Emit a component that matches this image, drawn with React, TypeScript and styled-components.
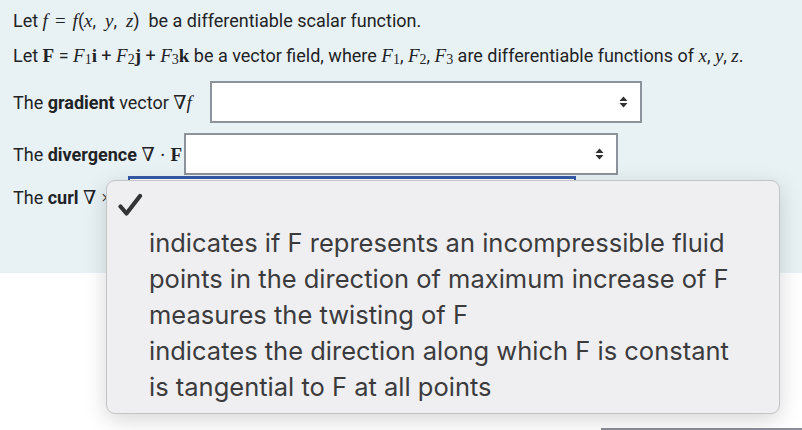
import styled, { createGlobalStyle } from "styled-components";

const GlobalStyle = createGlobalStyle`
  html, body {
    margin: 0;
    padding: 0;
    background: #ffffff;
  }
  body {
    font-family: Roboto, "Liberation Sans", Arial, sans-serif;
    color: #1f2326;
    overflow: hidden;
  }
`;

const Page = styled.div`
  width: 802px;
  height: 430px;
  display: flex;
  flex-direction: column;
  overflow: hidden;
`;

const Panel = styled.div`
  position: relative;
  height: 273px;
  box-sizing: border-box;
  padding: 9px 13px 0;
  background: #e8f2f5;
  display: flex;
  flex-direction: column;
`;

const Line = styled.div<{ $top?: number }>`
  font-size: 18px;
  line-height: 24px;
  margin-top: ${(p) => p.$top ?? 0}px;
  white-space: nowrap;
`;

const M = styled.span<{ $bold?: boolean; $italic?: boolean }>`
  font-family: "Liberation Serif", "DejaVu Serif", serif;
  font-size: 19px;
  font-style: ${(p) => (p.$italic ? "italic" : "normal")};
  font-weight: ${(p) => (p.$bold ? 700 : 400)};
`;

const Op = styled.span<{ $space: number }>`
  font-family: "Liberation Serif", "DejaVu Serif", serif;
  font-size: 19px;
  margin: 0 ${(p) => p.$space}px;
`;

const Sub = styled.span`
  font-family: "Liberation Serif", "DejaVu Serif", serif;
  font-size: 14px;
  position: relative;
  top: 2px;
`;

const Row = styled.div<{ $top: number }>`
  display: flex;
  align-items: center;
  margin-top: ${(p) => p.$top}px;
  white-space: nowrap;
`;

const Label = styled.span`
  font-size: 18px;
`;

const Select = styled.div<{ $width: number; $gap: number; $focused?: boolean }>`
  box-sizing: border-box;
  width: ${(p) => p.$width}px;
  height: 42px;
  margin-left: ${(p) => p.$gap}px;
  background: #ffffff;
  border: 2px solid ${(p) => (p.$focused ? "#3559a8" : "#8d939a")};
  border-top-width: ${(p) => (p.$focused ? 3 : 2)}px;
  display: flex;
  align-items: center;
  justify-content: flex-end;
  padding-right: 12px;
`;

const Dropdown = styled.div`
  position: absolute;
  left: 106px;
  top: 180px;
  width: 674px;
  height: 234px;
  box-sizing: border-box;
  padding: 5px 0 0 11px;
  background: #efeff1;
  border: 1px solid #c3c4c6;
  border-radius: 9px;
  box-shadow: 0 6px 22px rgba(0, 0, 0, 0.16);
  font-family: Inter, "Noto Sans", sans-serif;
  color: #3b3b3d;
`;

const Option = styled.div<{ $height?: number }>`
  display: flex;
  align-items: center;
  height: ${(p) => p.$height ?? 36}px;
  font-size: 25.5px;
  white-space: nowrap;
`;

const CheckSlot = styled.span`
  width: 31px;
  display: flex;
  align-items: center;
`;

const After = styled.div`
  margin: 155px 0 0 601px;
  flex: 1;
  border-top: 2px solid #898e98;
`;

function Arrows() {
  return (
    <svg width="9" height="12" viewBox="0 0 9 12">
      <path d="M4.5 0.5 L8.5 5 L0.5 5 Z" fill="#2f3133" />
      <path d="M0.5 7 L8.5 7 L4.5 11.5 Z" fill="#2f3133" />
    </svg>
  );
}

function Check() {
  return (
    <svg width="25" height="24" viewBox="0 0 25 24">
      <path
        d="M2.5 13.5 L8.5 20.5 L22 3"
        fill="none"
        stroke="#333436"
        strokeWidth="4.2"
        strokeLinecap="round"
        strokeLinejoin="round"
      />
    </svg>
  );
}

const options = [
  "indicates if F represents an incompressible fluid",
  "points in the direction of maximum increase of F",
  "measures the twisting of F",
  "indicates the direction along which F is constant",
  "is tangential to F at all points",
];

export default function App() {
  return (
    <>
      <GlobalStyle />
      <Page>
        <Panel>
          <Line>
            Let <M $italic>f</M>
            <Op $space={7}>=</Op>
            <M $italic>f</M>(<M $italic>x</M>,&nbsp; <M $italic>y</M>,&nbsp; <M $italic>z</M>)&nbsp; be a
            differentiable scalar function.
          </Line>
          <Line $top={11}>
            Let <M $bold>F</M> = <M $italic>F</M>
            <Sub>1</Sub>
            <M $bold>i</M> + <M $italic>F</M>
            <Sub>2</Sub>
            <M $bold>j</M> + <M $italic>F</M>
            <Sub>3</Sub>
            <M $bold>k</M> be a vector field, where <M $italic>F</M>
            <Sub>1</Sub>, <M $italic>F</M>
            <Sub>2</Sub>, <M $italic>F</M>
            <Sub>3</Sub> are differentiable functions of <M $italic>x</M>, <M $italic>y</M>,{" "}
            <M $italic>z</M>.
          </Line>
          <Row $top={11}>
            <Label>
              The <b>gradient</b> vector <M>∇</M>
              <M $italic>f</M>
            </Label>
            <Select $width={432} $gap={18}>
              <Arrows />
            </Select>
          </Row>
          <Row $top={10}>
            <Label>
              The <b>divergence</b> <M>∇ · </M>
              <M $bold>F</M>
            </Label>
            <Select $width={434} $gap={2}>
              <Arrows />
            </Select>
          </Row>
          <Row $top={1}>
            <Label>
              The <b>curl</b> <M>∇ × </M>
              <M $bold>F</M>
            </Label>
            <Select $width={448} $gap={0} $focused>
              <Arrows />
            </Select>
          </Row>
          <Dropdown>
            <Option $height={38}>
              <CheckSlot>
                <Check />
              </CheckSlot>
            </Option>
            {options.map((o) => (
              <Option key={o}>
                <CheckSlot />
                {o}
              </Option>
            ))}
          </Dropdown>
        </Panel>
        <After />
      </Page>
    </>
  );
}
